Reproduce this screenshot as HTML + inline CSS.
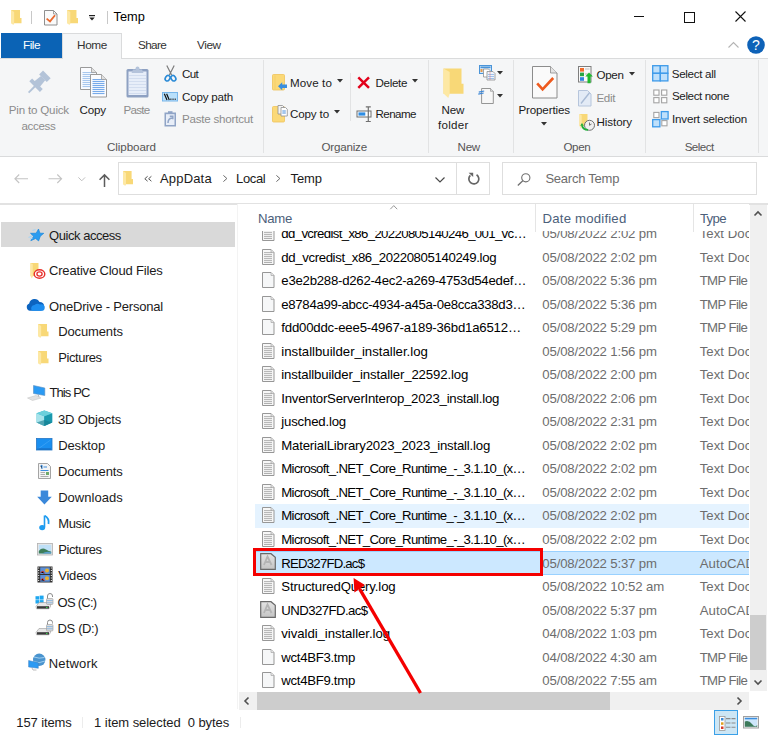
<!DOCTYPE html>
<html><head><meta charset="utf-8"><style>
html,body{margin:0;padding:0;width:768px;height:743px;overflow:hidden;background:#fff;}
body{position:relative;font-family:"Liberation Sans",sans-serif;}
.t{position:absolute;white-space:nowrap;}
</style></head><body>
<div class="t" style="left:113.50px;top:11.06px;font-size:12.8px;line-height:12.8px;color:#000;letter-spacing:0.000px;">Temp</div>
<div style="position:absolute;left:31px;top:11px;width:1px;height:13px;background:#c8c8c8;"></div>
<div style="position:absolute;left:107px;top:11px;width:1px;height:13px;background:#c8c8c8;"></div>
<div style="position:absolute;left:633.5px;top:16px;width:10.5px;height:1px;background:#111;"></div>
<div style="position:absolute;left:684px;top:11.5px;width:11px;height:11px;box-sizing:border-box;border:1px solid #111;background:transparent;"></div>
<svg style="position:absolute;left:735px;top:11px;overflow:visible" width="11" height="11" viewBox="0 0 11 11"><path d="M0.5 0.5 L10.5 10.5 M10.5 0.5 L0.5 10.5" stroke="#111" stroke-width="1.1" fill="none"/></svg>
<div style="position:absolute;left:1px;top:33px;width:61px;height:24.5px;background:#0b63b5;"></div>
<div class="t" style="left:23.00px;top:40.01px;font-size:11.8px;line-height:11.8px;color:#fff;letter-spacing:-0.503px;">File</div>
<div style="position:absolute;left:62px;top:33px;width:60px;height:25px;box-sizing:border-box;border:1px solid #dadbdc;background:#f5f6f7;border-bottom:none;"></div>
<div class="t" style="left:77.00px;top:40.01px;font-size:11.8px;line-height:11.8px;color:#333;letter-spacing:-0.369px;">Home</div>
<div class="t" style="left:138.00px;top:40.01px;font-size:11.8px;line-height:11.8px;color:#333;letter-spacing:-0.697px;">Share</div>
<div class="t" style="left:197.00px;top:40.01px;font-size:11.8px;line-height:11.8px;color:#333;letter-spacing:-0.441px;">View</div>
<svg style="position:absolute;left:727.5px;top:42px;overflow:visible" width="11" height="6" viewBox="0 0 11 6"><path d="M0.5 5.5 L5.5 0.5 L10.5 5.5" stroke="#b4b4b4" stroke-width="1.1" fill="none"/></svg>
<svg style="position:absolute;left:747px;top:36px;overflow:visible" width="18" height="18" viewBox="0 0 18 18"><circle cx="9" cy="9" r="8.8" fill="#0e62b8"/><text x="9" y="14" font-family="Liberation Sans" font-size="14" fill="#fff" text-anchor="middle">?</text></svg>
<div style="position:absolute;left:0px;top:57.5px;width:768px;height:99.5px;background:#f5f6f7;border-top:1px solid #dadbdc;border-bottom:1px solid #dadbdc;box-sizing:border-box;"></div>
<div style="position:absolute;left:63px;top:57px;width:58px;height:2px;background:#f5f6f7;"></div>
<div style="position:absolute;left:263px;top:60px;width:1px;height:93px;background:#e2e3e4;"></div>
<div style="position:absolute;left:428px;top:60px;width:1px;height:93px;background:#e2e3e4;"></div>
<div style="position:absolute;left:512.5px;top:60px;width:1px;height:93px;background:#e2e3e4;"></div>
<div style="position:absolute;left:644.8px;top:60px;width:1px;height:93px;background:#e2e3e4;"></div>
<div style="position:absolute;left:757.7px;top:60px;width:1px;height:93px;background:#e2e3e4;"></div>
<div style="position:absolute;left:349.5px;top:73px;width:1px;height:48px;background:#e2e3e4;"></div>
<div class="t" style="left:8.80px;top:104.18px;font-size:11.6px;line-height:11.6px;color:#8c8c8c;letter-spacing:-0.195px;">Pin to Quick</div>
<div class="t" style="left:21.50px;top:119.68px;font-size:11.6px;line-height:11.6px;color:#8c8c8c;letter-spacing:-0.350px;">access</div>
<div class="t" style="left:79.50px;top:104.18px;font-size:11.6px;line-height:11.6px;color:#1b1b1b;letter-spacing:-0.145px;">Copy</div>
<div class="t" style="left:123.50px;top:104.18px;font-size:11.6px;line-height:11.6px;color:#8c8c8c;letter-spacing:-0.732px;">Paste</div>
<div class="t" style="left:182.00px;top:68.18px;font-size:11.6px;line-height:11.6px;color:#1b1b1b;letter-spacing:-0.684px;">Cut</div>
<div class="t" style="left:182.00px;top:90.68px;font-size:11.6px;line-height:11.6px;color:#1b1b1b;letter-spacing:-0.208px;">Copy path</div>
<div class="t" style="left:182.00px;top:112.88px;font-size:11.6px;line-height:11.6px;color:#8c8c8c;letter-spacing:-0.225px;">Paste shortcut</div>
<div class="t" style="left:107.00px;top:141.18px;font-size:11.6px;line-height:11.6px;color:#555;letter-spacing:-0.072px;">Clipboard</div>
<div class="t" style="left:290.00px;top:76.78px;font-size:11.6px;line-height:11.6px;color:#1b1b1b;letter-spacing:0.106px;">Move to</div>
<div class="t" style="left:375.50px;top:76.78px;font-size:11.6px;line-height:11.6px;color:#1b1b1b;letter-spacing:-0.338px;">Delete</div>
<div class="t" style="left:290.00px;top:108.18px;font-size:11.6px;line-height:11.6px;color:#1b1b1b;letter-spacing:-0.139px;">Copy to</div>
<div class="t" style="left:375.50px;top:108.18px;font-size:11.6px;line-height:11.6px;color:#1b1b1b;letter-spacing:-0.557px;">Rename</div>
<div class="t" style="left:321.40px;top:141.18px;font-size:11.6px;line-height:11.6px;color:#555;letter-spacing:-0.183px;">Organize</div>
<div class="t" style="left:441.60px;top:104.48px;font-size:11.6px;line-height:11.6px;color:#1b1b1b;letter-spacing:-0.268px;">New</div>
<div class="t" style="left:438.00px;top:118.98px;font-size:11.6px;line-height:11.6px;color:#1b1b1b;letter-spacing:0.248px;">folder</div>
<div class="t" style="left:457.50px;top:141.18px;font-size:11.6px;line-height:11.6px;color:#555;letter-spacing:-0.235px;">New</div>
<div class="t" style="left:518.40px;top:104.18px;font-size:11.6px;line-height:11.6px;color:#1b1b1b;letter-spacing:-0.127px;">Properties</div>
<div class="t" style="left:596.50px;top:68.88px;font-size:11.6px;line-height:11.6px;color:#1b1b1b;letter-spacing:-0.319px;">Open</div>
<div class="t" style="left:596.50px;top:92.18px;font-size:11.6px;line-height:11.6px;color:#8c8c8c;letter-spacing:-0.372px;">Edit</div>
<div class="t" style="left:596.50px;top:116.18px;font-size:11.6px;line-height:11.6px;color:#1b1b1b;letter-spacing:-0.084px;">History</div>
<div class="t" style="left:563.40px;top:141.18px;font-size:11.6px;line-height:11.6px;color:#555;letter-spacing:-0.344px;">Open</div>
<div class="t" style="left:671.80px;top:68.38px;font-size:11.6px;line-height:11.6px;color:#1b1b1b;letter-spacing:-0.317px;">Select all</div>
<div class="t" style="left:672.00px;top:90.18px;font-size:11.6px;line-height:11.6px;color:#1b1b1b;letter-spacing:-0.388px;">Select none</div>
<div class="t" style="left:672.00px;top:112.68px;font-size:11.6px;line-height:11.6px;color:#1b1b1b;letter-spacing:-0.188px;">Invert selection</div>
<div class="t" style="left:684.70px;top:141.18px;font-size:11.6px;line-height:11.6px;color:#555;letter-spacing:-0.556px;">Select</div>
<svg style="position:absolute;left:336.5px;top:78.5px;overflow:visible" width="6" height="3.5" viewBox="0 0 6 3.5"><path d="M0 0 L6 0 L3 3.5 Z" fill="#333"/></svg>
<svg style="position:absolute;left:412px;top:78.5px;overflow:visible" width="6" height="3.5" viewBox="0 0 6 3.5"><path d="M0 0 L6 0 L3 3.5 Z" fill="#333"/></svg>
<svg style="position:absolute;left:333.5px;top:110px;overflow:visible" width="6" height="3.5" viewBox="0 0 6 3.5"><path d="M0 0 L6 0 L3 3.5 Z" fill="#333"/></svg>
<svg style="position:absolute;left:497px;top:71px;overflow:visible" width="6" height="3.5" viewBox="0 0 6 3.5"><path d="M0 0 L6 0 L3 3.5 Z" fill="#333"/></svg>
<svg style="position:absolute;left:497px;top:94px;overflow:visible" width="6" height="3.5" viewBox="0 0 6 3.5"><path d="M0 0 L6 0 L3 3.5 Z" fill="#333"/></svg>
<svg style="position:absolute;left:540.5px;top:121.5px;overflow:visible" width="6" height="3.5" viewBox="0 0 6 3.5"><path d="M0 0 L6 0 L3 3.5 Z" fill="#333"/></svg>
<svg style="position:absolute;left:629px;top:71.5px;overflow:visible" width="6" height="3.5" viewBox="0 0 6 3.5"><path d="M0 0 L6 0 L3 3.5 Z" fill="#333"/></svg>
<div style="position:absolute;left:0px;top:203px;width:768px;height:1.6px;background:#e2e2e2;"></div>
<div style="position:absolute;left:118px;top:161.5px;width:338.5px;height:33.5px;box-sizing:border-box;border:1px solid #dedede;background:transparent;"></div>
<div style="position:absolute;left:455.8px;top:161.5px;width:34.7px;height:33.5px;box-sizing:border-box;border:1px solid #dedede;background:transparent;"></div>
<div style="position:absolute;left:501.5px;top:161.5px;width:255.3px;height:33.5px;box-sizing:border-box;border:1px solid #dedede;background:transparent;"></div>
<div class="t" style="left:160.00px;top:172.40px;font-size:13px;line-height:13px;color:#1b1b1b;letter-spacing:0.173px;">AppData</div>
<div class="t" style="left:236.00px;top:172.40px;font-size:13px;line-height:13px;color:#1b1b1b;letter-spacing:-0.335px;">Local</div>
<div class="t" style="left:290.60px;top:172.40px;font-size:13px;line-height:13px;color:#1b1b1b;letter-spacing:-0.122px;">Temp</div>
<div class="t" style="left:545.40px;top:171.90px;font-size:13px;line-height:13px;color:#6d6d6d;letter-spacing:-0.232px;">Search Temp</div>
<div style="position:absolute;left:1px;top:222px;width:233.7px;height:25.4px;background:#d9d9d9;"></div>
<div style="position:absolute;left:236.7px;top:204px;width:1px;height:505px;background:#f3f3f3;"></div>
<div class="t" style="left:49.00px;top:229.00px;font-size:13px;line-height:13px;color:#1b1b1b;letter-spacing:-0.450px;">Quick access</div>
<div class="t" style="left:49.00px;top:264.00px;font-size:13px;line-height:13px;color:#1b1b1b;letter-spacing:-0.177px;">Creative Cloud Files</div>
<div class="t" style="left:49.00px;top:299.70px;font-size:13px;line-height:13px;color:#1b1b1b;letter-spacing:-0.198px;">OneDrive - Personal</div>
<div class="t" style="left:58.20px;top:324.80px;font-size:13px;line-height:13px;color:#1b1b1b;letter-spacing:-0.127px;">Documents</div>
<div class="t" style="left:58.20px;top:351.00px;font-size:13px;line-height:13px;color:#1b1b1b;letter-spacing:-0.432px;">Pictures</div>
<div class="t" style="left:49.50px;top:386.20px;font-size:13px;line-height:13px;color:#1b1b1b;letter-spacing:-0.904px;">This PC</div>
<div class="t" style="left:58.00px;top:412.50px;font-size:13px;line-height:13px;color:#1b1b1b;letter-spacing:-0.130px;">3D Objects</div>
<div class="t" style="left:58.20px;top:438.60px;font-size:13px;line-height:13px;color:#1b1b1b;letter-spacing:-0.113px;">Desktop</div>
<div class="t" style="left:58.00px;top:465.00px;font-size:13px;line-height:13px;color:#1b1b1b;letter-spacing:-0.127px;">Documents</div>
<div class="t" style="left:58.20px;top:491.00px;font-size:13px;line-height:13px;color:#1b1b1b;letter-spacing:0.032px;">Downloads</div>
<div class="t" style="left:58.20px;top:517.20px;font-size:13px;line-height:13px;color:#1b1b1b;letter-spacing:-0.329px;">Music</div>
<div class="t" style="left:58.20px;top:543.40px;font-size:13px;line-height:13px;color:#1b1b1b;letter-spacing:-0.432px;">Pictures</div>
<div class="t" style="left:58.20px;top:569.40px;font-size:13px;line-height:13px;color:#1b1b1b;letter-spacing:-0.202px;">Videos</div>
<div class="t" style="left:57.60px;top:595.50px;font-size:13px;line-height:13px;color:#1b1b1b;letter-spacing:-0.750px;">OS (C:)</div>
<div class="t" style="left:57.60px;top:621.50px;font-size:13px;line-height:13px;color:#1b1b1b;letter-spacing:-0.376px;">DS (D:)</div>
<div class="t" style="left:48.80px;top:657.00px;font-size:13px;line-height:13px;color:#1b1b1b;letter-spacing:0.175px;">Network</div>
<div style="position:absolute;left:255px;top:504.0300000000001px;width:494px;height:23.53px;background:#e5f3ff;"></div>
<div style="position:absolute;left:255px;top:551.09px;width:494px;height:23.53px;box-sizing:border-box;border:1px solid #99d1ff;background:#cce8ff;border-right:none;"></div>
<div style="position:absolute;left:0;top:231px;width:749px;height:461px;overflow:hidden">
<div style="position:absolute;left:0;top:0;width:535px;height:461px;overflow:hidden">
<div class="t" style="left:281.30px;top:-3.90px;font-size:13.2px;line-height:13.2px;color:#000;letter-spacing:-0.640px;">dd_vcredist_x86_20220805140246_001_vc…</div>
<svg style="position:absolute;left:262px;top:-5.929999999999989px;overflow:visible" width="12.5" height="16" viewBox="0 0 12.5 16"><path d="M0.5 0.5 H9 L12 3.5 V15.5 H0.5 Z" fill="#f7f7f7" stroke="#979797" stroke-width="1"/><rect x="2" y="3.2" width="8" height="0.9" fill="#a8a8a8"/><rect x="2" y="5.2" width="8" height="0.9" fill="#a8a8a8"/><rect x="2" y="7.2" width="8" height="0.9" fill="#a8a8a8"/><rect x="2" y="9.2" width="8" height="0.9" fill="#a8a8a8"/><rect x="2" y="11.2" width="8" height="0.9" fill="#a8a8a8"/><rect x="2" y="13" width="8" height="0.9" fill="#a8a8a8"/><path d="M9 0.5 V3.5 H12" fill="#ddd" stroke="#9a9a9a" stroke-width="0.6"/></svg>
</div>
<div class="t" style="left:542.30px;top:-3.90px;font-size:13.2px;line-height:13.2px;color:#6d6d6d;letter-spacing:-0.156px;">05/08/2022 2:02 pm</div>
<div style="position:absolute;left:0;top:0;width:749px;height:461px;overflow:hidden">
<div class="t" style="left:699.70px;top:-3.90px;font-size:13.2px;line-height:13.2px;color:#6d6d6d;letter-spacing:0.050px;">Text Doc</div>
</div>
<div style="position:absolute;left:0;top:0;width:535px;height:461px;overflow:hidden">
<div class="t" style="left:281.30px;top:19.63px;font-size:13.2px;line-height:13.2px;color:#000;letter-spacing:-0.368px;">dd_vcredist_x86_20220805140249.log</div>
<svg style="position:absolute;left:262px;top:17.600000000000012px;overflow:visible" width="12.5" height="16" viewBox="0 0 12.5 16"><path d="M0.5 0.5 H9 L12 3.5 V15.5 H0.5 Z" fill="#f7f7f7" stroke="#979797" stroke-width="1"/><rect x="2" y="3.2" width="8" height="0.9" fill="#a8a8a8"/><rect x="2" y="5.2" width="8" height="0.9" fill="#a8a8a8"/><rect x="2" y="7.2" width="8" height="0.9" fill="#a8a8a8"/><rect x="2" y="9.2" width="8" height="0.9" fill="#a8a8a8"/><rect x="2" y="11.2" width="8" height="0.9" fill="#a8a8a8"/><rect x="2" y="13" width="8" height="0.9" fill="#a8a8a8"/><path d="M9 0.5 V3.5 H12" fill="#ddd" stroke="#9a9a9a" stroke-width="0.6"/></svg>
</div>
<div class="t" style="left:542.30px;top:19.63px;font-size:13.2px;line-height:13.2px;color:#6d6d6d;letter-spacing:-0.156px;">05/08/2022 2:02 pm</div>
<div style="position:absolute;left:0;top:0;width:749px;height:461px;overflow:hidden">
<div class="t" style="left:699.70px;top:19.63px;font-size:13.2px;line-height:13.2px;color:#6d6d6d;letter-spacing:0.050px;">Text Doc</div>
</div>
<div style="position:absolute;left:0;top:0;width:535px;height:461px;overflow:hidden">
<div class="t" style="left:281.30px;top:43.16px;font-size:13.2px;line-height:13.2px;color:#000;letter-spacing:-0.248px;">e3e2b288-d262-4ec2-a269-4753d54edef…</div>
<svg style="position:absolute;left:262px;top:41.13000000000004px;overflow:visible" width="12.5" height="16" viewBox="0 0 12.5 16"><path d="M0.5 0.5 H9 L12 3.5 V15.5 H0.5 Z" fill="#f6f7f8" stroke="#979797" stroke-width="1"/><path d="M9 0.5 V3.5 H12" fill="#e5e5e5" stroke="#9a9a9a" stroke-width="0.6"/></svg>
</div>
<div class="t" style="left:542.30px;top:43.16px;font-size:13.2px;line-height:13.2px;color:#6d6d6d;letter-spacing:-0.156px;">05/08/2022 5:36 pm</div>
<div style="position:absolute;left:0;top:0;width:749px;height:461px;overflow:hidden">
<div class="t" style="left:699.70px;top:43.16px;font-size:13.2px;line-height:13.2px;color:#6d6d6d;letter-spacing:-0.620px;">TMP File</div>
</div>
<div style="position:absolute;left:0;top:0;width:535px;height:461px;overflow:hidden">
<div class="t" style="left:281.30px;top:66.69px;font-size:13.2px;line-height:13.2px;color:#000;letter-spacing:-0.310px;">e8784a99-abcc-4934-a45a-0e8cca338d3…</div>
<svg style="position:absolute;left:262px;top:64.66000000000001px;overflow:visible" width="12.5" height="16" viewBox="0 0 12.5 16"><path d="M0.5 0.5 H9 L12 3.5 V15.5 H0.5 Z" fill="#f6f7f8" stroke="#979797" stroke-width="1"/><path d="M9 0.5 V3.5 H12" fill="#e5e5e5" stroke="#9a9a9a" stroke-width="0.6"/></svg>
</div>
<div class="t" style="left:542.30px;top:66.69px;font-size:13.2px;line-height:13.2px;color:#6d6d6d;letter-spacing:-0.156px;">05/08/2022 5:36 pm</div>
<div style="position:absolute;left:0;top:0;width:749px;height:461px;overflow:hidden">
<div class="t" style="left:699.70px;top:66.69px;font-size:13.2px;line-height:13.2px;color:#6d6d6d;letter-spacing:-0.620px;">TMP File</div>
</div>
<div style="position:absolute;left:0;top:0;width:535px;height:461px;overflow:hidden">
<div class="t" style="left:281.30px;top:90.22px;font-size:13.2px;line-height:13.2px;color:#000;letter-spacing:-0.194px;">fdd00ddc-eee5-4967-a189-36bd1a6512…</div>
<svg style="position:absolute;left:262px;top:88.18999999999998px;overflow:visible" width="12.5" height="16" viewBox="0 0 12.5 16"><path d="M0.5 0.5 H9 L12 3.5 V15.5 H0.5 Z" fill="#f6f7f8" stroke="#979797" stroke-width="1"/><path d="M9 0.5 V3.5 H12" fill="#e5e5e5" stroke="#9a9a9a" stroke-width="0.6"/></svg>
</div>
<div class="t" style="left:542.30px;top:90.22px;font-size:13.2px;line-height:13.2px;color:#6d6d6d;letter-spacing:-0.156px;">05/08/2022 5:29 pm</div>
<div style="position:absolute;left:0;top:0;width:749px;height:461px;overflow:hidden">
<div class="t" style="left:699.70px;top:90.22px;font-size:13.2px;line-height:13.2px;color:#6d6d6d;letter-spacing:-0.620px;">TMP File</div>
</div>
<div style="position:absolute;left:0;top:0;width:535px;height:461px;overflow:hidden">
<div class="t" style="left:281.30px;top:113.75px;font-size:13.2px;line-height:13.2px;color:#000;letter-spacing:-0.002px;">installbuilder_installer.log</div>
<svg style="position:absolute;left:262px;top:111.72000000000001px;overflow:visible" width="12.5" height="16" viewBox="0 0 12.5 16"><path d="M0.5 0.5 H9 L12 3.5 V15.5 H0.5 Z" fill="#f7f7f7" stroke="#979797" stroke-width="1"/><rect x="2" y="3.2" width="8" height="0.9" fill="#a8a8a8"/><rect x="2" y="5.2" width="8" height="0.9" fill="#a8a8a8"/><rect x="2" y="7.2" width="8" height="0.9" fill="#a8a8a8"/><rect x="2" y="9.2" width="8" height="0.9" fill="#a8a8a8"/><rect x="2" y="11.2" width="8" height="0.9" fill="#a8a8a8"/><rect x="2" y="13" width="8" height="0.9" fill="#a8a8a8"/><path d="M9 0.5 V3.5 H12" fill="#ddd" stroke="#9a9a9a" stroke-width="0.6"/></svg>
</div>
<div class="t" style="left:542.30px;top:113.75px;font-size:13.2px;line-height:13.2px;color:#6d6d6d;letter-spacing:-0.156px;">05/08/2022 1:56 pm</div>
<div style="position:absolute;left:0;top:0;width:749px;height:461px;overflow:hidden">
<div class="t" style="left:699.70px;top:113.75px;font-size:13.2px;line-height:13.2px;color:#6d6d6d;letter-spacing:0.050px;">Text Doc</div>
</div>
<div style="position:absolute;left:0;top:0;width:535px;height:461px;overflow:hidden">
<div class="t" style="left:281.30px;top:137.28px;font-size:13.2px;line-height:13.2px;color:#000;letter-spacing:-0.133px;">installbuilder_installer_22592.log</div>
<svg style="position:absolute;left:262px;top:135.25000000000006px;overflow:visible" width="12.5" height="16" viewBox="0 0 12.5 16"><path d="M0.5 0.5 H9 L12 3.5 V15.5 H0.5 Z" fill="#f7f7f7" stroke="#979797" stroke-width="1"/><rect x="2" y="3.2" width="8" height="0.9" fill="#a8a8a8"/><rect x="2" y="5.2" width="8" height="0.9" fill="#a8a8a8"/><rect x="2" y="7.2" width="8" height="0.9" fill="#a8a8a8"/><rect x="2" y="9.2" width="8" height="0.9" fill="#a8a8a8"/><rect x="2" y="11.2" width="8" height="0.9" fill="#a8a8a8"/><rect x="2" y="13" width="8" height="0.9" fill="#a8a8a8"/><path d="M9 0.5 V3.5 H12" fill="#ddd" stroke="#9a9a9a" stroke-width="0.6"/></svg>
</div>
<div class="t" style="left:542.30px;top:137.28px;font-size:13.2px;line-height:13.2px;color:#6d6d6d;letter-spacing:-0.156px;">05/08/2022 2:00 pm</div>
<div style="position:absolute;left:0;top:0;width:749px;height:461px;overflow:hidden">
<div class="t" style="left:699.70px;top:137.28px;font-size:13.2px;line-height:13.2px;color:#6d6d6d;letter-spacing:0.050px;">Text Doc</div>
</div>
<div style="position:absolute;left:0;top:0;width:535px;height:461px;overflow:hidden">
<div class="t" style="left:281.30px;top:160.81px;font-size:13.2px;line-height:13.2px;color:#000;letter-spacing:-0.230px;">InventorServerInterop_2023_install.log</div>
<svg style="position:absolute;left:262px;top:158.78000000000003px;overflow:visible" width="12.5" height="16" viewBox="0 0 12.5 16"><path d="M0.5 0.5 H9 L12 3.5 V15.5 H0.5 Z" fill="#f7f7f7" stroke="#979797" stroke-width="1"/><rect x="2" y="3.2" width="8" height="0.9" fill="#a8a8a8"/><rect x="2" y="5.2" width="8" height="0.9" fill="#a8a8a8"/><rect x="2" y="7.2" width="8" height="0.9" fill="#a8a8a8"/><rect x="2" y="9.2" width="8" height="0.9" fill="#a8a8a8"/><rect x="2" y="11.2" width="8" height="0.9" fill="#a8a8a8"/><rect x="2" y="13" width="8" height="0.9" fill="#a8a8a8"/><path d="M9 0.5 V3.5 H12" fill="#ddd" stroke="#9a9a9a" stroke-width="0.6"/></svg>
</div>
<div class="t" style="left:542.30px;top:160.81px;font-size:13.2px;line-height:13.2px;color:#6d6d6d;letter-spacing:-0.156px;">05/08/2022 2:06 pm</div>
<div style="position:absolute;left:0;top:0;width:749px;height:461px;overflow:hidden">
<div class="t" style="left:699.70px;top:160.81px;font-size:13.2px;line-height:13.2px;color:#6d6d6d;letter-spacing:0.050px;">Text Doc</div>
</div>
<div style="position:absolute;left:0;top:0;width:535px;height:461px;overflow:hidden">
<div class="t" style="left:281.30px;top:184.34px;font-size:13.2px;line-height:13.2px;color:#000;letter-spacing:-0.189px;">jusched.log</div>
<svg style="position:absolute;left:262px;top:182.31px;overflow:visible" width="12.5" height="16" viewBox="0 0 12.5 16"><path d="M0.5 0.5 H9 L12 3.5 V15.5 H0.5 Z" fill="#f7f7f7" stroke="#979797" stroke-width="1"/><rect x="2" y="3.2" width="8" height="0.9" fill="#a8a8a8"/><rect x="2" y="5.2" width="8" height="0.9" fill="#a8a8a8"/><rect x="2" y="7.2" width="8" height="0.9" fill="#a8a8a8"/><rect x="2" y="9.2" width="8" height="0.9" fill="#a8a8a8"/><rect x="2" y="11.2" width="8" height="0.9" fill="#a8a8a8"/><rect x="2" y="13" width="8" height="0.9" fill="#a8a8a8"/><path d="M9 0.5 V3.5 H12" fill="#ddd" stroke="#9a9a9a" stroke-width="0.6"/></svg>
</div>
<div class="t" style="left:542.30px;top:184.34px;font-size:13.2px;line-height:13.2px;color:#6d6d6d;letter-spacing:-0.156px;">05/08/2022 2:31 pm</div>
<div style="position:absolute;left:0;top:0;width:749px;height:461px;overflow:hidden">
<div class="t" style="left:699.70px;top:184.34px;font-size:13.2px;line-height:13.2px;color:#6d6d6d;letter-spacing:0.050px;">Text Doc</div>
</div>
<div style="position:absolute;left:0;top:0;width:535px;height:461px;overflow:hidden">
<div class="t" style="left:281.30px;top:207.87px;font-size:13.2px;line-height:13.2px;color:#000;letter-spacing:-0.187px;">MaterialLibrary2023_2023_install.log</div>
<svg style="position:absolute;left:262px;top:205.84000000000003px;overflow:visible" width="12.5" height="16" viewBox="0 0 12.5 16"><path d="M0.5 0.5 H9 L12 3.5 V15.5 H0.5 Z" fill="#f7f7f7" stroke="#979797" stroke-width="1"/><rect x="2" y="3.2" width="8" height="0.9" fill="#a8a8a8"/><rect x="2" y="5.2" width="8" height="0.9" fill="#a8a8a8"/><rect x="2" y="7.2" width="8" height="0.9" fill="#a8a8a8"/><rect x="2" y="9.2" width="8" height="0.9" fill="#a8a8a8"/><rect x="2" y="11.2" width="8" height="0.9" fill="#a8a8a8"/><rect x="2" y="13" width="8" height="0.9" fill="#a8a8a8"/><path d="M9 0.5 V3.5 H12" fill="#ddd" stroke="#9a9a9a" stroke-width="0.6"/></svg>
</div>
<div class="t" style="left:542.30px;top:207.87px;font-size:13.2px;line-height:13.2px;color:#6d6d6d;letter-spacing:-0.156px;">05/08/2022 2:02 pm</div>
<div style="position:absolute;left:0;top:0;width:749px;height:461px;overflow:hidden">
<div class="t" style="left:699.70px;top:207.87px;font-size:13.2px;line-height:13.2px;color:#6d6d6d;letter-spacing:0.050px;">Text Doc</div>
</div>
<div style="position:absolute;left:0;top:0;width:535px;height:461px;overflow:hidden">
<div class="t" style="left:281.30px;top:231.40px;font-size:13.2px;line-height:13.2px;color:#000;letter-spacing:-0.667px;">Microsoft_.NET_Core_Runtime_-_3.1.10_(x…</div>
<svg style="position:absolute;left:262px;top:229.37000000000006px;overflow:visible" width="12.5" height="16" viewBox="0 0 12.5 16"><path d="M0.5 0.5 H9 L12 3.5 V15.5 H0.5 Z" fill="#f7f7f7" stroke="#979797" stroke-width="1"/><rect x="2" y="3.2" width="8" height="0.9" fill="#a8a8a8"/><rect x="2" y="5.2" width="8" height="0.9" fill="#a8a8a8"/><rect x="2" y="7.2" width="8" height="0.9" fill="#a8a8a8"/><rect x="2" y="9.2" width="8" height="0.9" fill="#a8a8a8"/><rect x="2" y="11.2" width="8" height="0.9" fill="#a8a8a8"/><rect x="2" y="13" width="8" height="0.9" fill="#a8a8a8"/><path d="M9 0.5 V3.5 H12" fill="#ddd" stroke="#9a9a9a" stroke-width="0.6"/></svg>
</div>
<div class="t" style="left:542.30px;top:231.40px;font-size:13.2px;line-height:13.2px;color:#6d6d6d;letter-spacing:-0.156px;">05/08/2022 2:02 pm</div>
<div style="position:absolute;left:0;top:0;width:749px;height:461px;overflow:hidden">
<div class="t" style="left:699.70px;top:231.40px;font-size:13.2px;line-height:13.2px;color:#6d6d6d;letter-spacing:0.050px;">Text Doc</div>
</div>
<div style="position:absolute;left:0;top:0;width:535px;height:461px;overflow:hidden">
<div class="t" style="left:281.30px;top:254.93px;font-size:13.2px;line-height:13.2px;color:#000;letter-spacing:-0.667px;">Microsoft_.NET_Core_Runtime_-_3.1.10_(x…</div>
<svg style="position:absolute;left:262px;top:252.90000000000003px;overflow:visible" width="12.5" height="16" viewBox="0 0 12.5 16"><path d="M0.5 0.5 H9 L12 3.5 V15.5 H0.5 Z" fill="#f7f7f7" stroke="#979797" stroke-width="1"/><rect x="2" y="3.2" width="8" height="0.9" fill="#a8a8a8"/><rect x="2" y="5.2" width="8" height="0.9" fill="#a8a8a8"/><rect x="2" y="7.2" width="8" height="0.9" fill="#a8a8a8"/><rect x="2" y="9.2" width="8" height="0.9" fill="#a8a8a8"/><rect x="2" y="11.2" width="8" height="0.9" fill="#a8a8a8"/><rect x="2" y="13" width="8" height="0.9" fill="#a8a8a8"/><path d="M9 0.5 V3.5 H12" fill="#ddd" stroke="#9a9a9a" stroke-width="0.6"/></svg>
</div>
<div class="t" style="left:542.30px;top:254.93px;font-size:13.2px;line-height:13.2px;color:#6d6d6d;letter-spacing:-0.156px;">05/08/2022 2:02 pm</div>
<div style="position:absolute;left:0;top:0;width:749px;height:461px;overflow:hidden">
<div class="t" style="left:699.70px;top:254.93px;font-size:13.2px;line-height:13.2px;color:#6d6d6d;letter-spacing:0.050px;">Text Doc</div>
</div>
<div style="position:absolute;left:0;top:0;width:535px;height:461px;overflow:hidden">
<div class="t" style="left:281.30px;top:278.46px;font-size:13.2px;line-height:13.2px;color:#000;letter-spacing:-0.667px;">Microsoft_.NET_Core_Runtime_-_3.1.10_(x…</div>
<svg style="position:absolute;left:262px;top:276.4300000000001px;overflow:visible" width="12.5" height="16" viewBox="0 0 12.5 16"><path d="M0.5 0.5 H9 L12 3.5 V15.5 H0.5 Z" fill="#f7f7f7" stroke="#979797" stroke-width="1"/><rect x="2" y="3.2" width="8" height="0.9" fill="#a8a8a8"/><rect x="2" y="5.2" width="8" height="0.9" fill="#a8a8a8"/><rect x="2" y="7.2" width="8" height="0.9" fill="#a8a8a8"/><rect x="2" y="9.2" width="8" height="0.9" fill="#a8a8a8"/><rect x="2" y="11.2" width="8" height="0.9" fill="#a8a8a8"/><rect x="2" y="13" width="8" height="0.9" fill="#a8a8a8"/><path d="M9 0.5 V3.5 H12" fill="#ddd" stroke="#9a9a9a" stroke-width="0.6"/></svg>
</div>
<div class="t" style="left:542.30px;top:278.46px;font-size:13.2px;line-height:13.2px;color:#6d6d6d;letter-spacing:-0.156px;">05/08/2022 2:02 pm</div>
<div style="position:absolute;left:0;top:0;width:749px;height:461px;overflow:hidden">
<div class="t" style="left:699.70px;top:278.46px;font-size:13.2px;line-height:13.2px;color:#6d6d6d;letter-spacing:0.050px;">Text Doc</div>
</div>
<div style="position:absolute;left:0;top:0;width:535px;height:461px;overflow:hidden">
<div class="t" style="left:281.30px;top:301.99px;font-size:13.2px;line-height:13.2px;color:#000;letter-spacing:-0.667px;">Microsoft_.NET_Core_Runtime_-_3.1.10_(x…</div>
<svg style="position:absolute;left:262px;top:299.9600000000001px;overflow:visible" width="12.5" height="16" viewBox="0 0 12.5 16"><path d="M0.5 0.5 H9 L12 3.5 V15.5 H0.5 Z" fill="#f7f7f7" stroke="#979797" stroke-width="1"/><rect x="2" y="3.2" width="8" height="0.9" fill="#a8a8a8"/><rect x="2" y="5.2" width="8" height="0.9" fill="#a8a8a8"/><rect x="2" y="7.2" width="8" height="0.9" fill="#a8a8a8"/><rect x="2" y="9.2" width="8" height="0.9" fill="#a8a8a8"/><rect x="2" y="11.2" width="8" height="0.9" fill="#a8a8a8"/><rect x="2" y="13" width="8" height="0.9" fill="#a8a8a8"/><path d="M9 0.5 V3.5 H12" fill="#ddd" stroke="#9a9a9a" stroke-width="0.6"/></svg>
</div>
<div class="t" style="left:542.30px;top:301.99px;font-size:13.2px;line-height:13.2px;color:#6d6d6d;letter-spacing:-0.156px;">05/08/2022 2:02 pm</div>
<div style="position:absolute;left:0;top:0;width:749px;height:461px;overflow:hidden">
<div class="t" style="left:699.70px;top:301.99px;font-size:13.2px;line-height:13.2px;color:#6d6d6d;letter-spacing:0.050px;">Text Doc</div>
</div>
<div style="position:absolute;left:0;top:0;width:535px;height:461px;overflow:hidden">
<div class="t" style="left:281.30px;top:325.52px;font-size:13.2px;line-height:13.2px;color:#000;letter-spacing:-0.786px;">RED327FD.ac$</div>
<svg style="position:absolute;left:260px;top:322.49000000000007px;overflow:visible" width="16" height="17" viewBox="0 0 16 17"><defs><linearGradient id="ag" x1="0" y1="0" x2="0" y2="1"><stop offset="0" stop-color="#e4e4e4"/><stop offset="1" stop-color="#c4c4c4"/></linearGradient></defs><path d="M0.7 0.7 H11 L15.3 4.4 V16.3 H0.7 Z" fill="url(#ag)" stroke="#6a6a6a" stroke-width="1.2"/><path d="M4 12 L7.5 3.5 L11.5 12 M5.5 9 H9.5" stroke="#b4b4b4" stroke-width="1.8" fill="none"/></svg>
</div>
<div class="t" style="left:542.30px;top:325.52px;font-size:13.2px;line-height:13.2px;color:#6d6d6d;letter-spacing:-0.156px;">05/08/2022 5:37 pm</div>
<div style="position:absolute;left:0;top:0;width:749px;height:461px;overflow:hidden">
<div class="t" style="left:699.70px;top:325.52px;font-size:13.2px;line-height:13.2px;color:#6d6d6d;letter-spacing:0.050px;">AutoCAD</div>
</div>
<div style="position:absolute;left:0;top:0;width:535px;height:461px;overflow:hidden">
<div class="t" style="left:281.30px;top:349.05px;font-size:13.2px;line-height:13.2px;color:#000;letter-spacing:-0.149px;">StructuredQuery.log</div>
<svg style="position:absolute;left:262px;top:347.02000000000004px;overflow:visible" width="12.5" height="16" viewBox="0 0 12.5 16"><path d="M0.5 0.5 H9 L12 3.5 V15.5 H0.5 Z" fill="#f7f7f7" stroke="#979797" stroke-width="1"/><rect x="2" y="3.2" width="8" height="0.9" fill="#a8a8a8"/><rect x="2" y="5.2" width="8" height="0.9" fill="#a8a8a8"/><rect x="2" y="7.2" width="8" height="0.9" fill="#a8a8a8"/><rect x="2" y="9.2" width="8" height="0.9" fill="#a8a8a8"/><rect x="2" y="11.2" width="8" height="0.9" fill="#a8a8a8"/><rect x="2" y="13" width="8" height="0.9" fill="#a8a8a8"/><path d="M9 0.5 V3.5 H12" fill="#ddd" stroke="#9a9a9a" stroke-width="0.6"/></svg>
</div>
<div class="t" style="left:542.30px;top:349.05px;font-size:13.2px;line-height:13.2px;color:#6d6d6d;letter-spacing:-0.156px;">05/08/2022 10:52 am</div>
<div style="position:absolute;left:0;top:0;width:749px;height:461px;overflow:hidden">
<div class="t" style="left:699.70px;top:349.05px;font-size:13.2px;line-height:13.2px;color:#6d6d6d;letter-spacing:0.050px;">Text Doc</div>
</div>
<div style="position:absolute;left:0;top:0;width:535px;height:461px;overflow:hidden">
<div class="t" style="left:281.30px;top:372.58px;font-size:13.2px;line-height:13.2px;color:#000;letter-spacing:-0.564px;">UND327FD.ac$</div>
<svg style="position:absolute;left:260px;top:369.55px;overflow:visible" width="16" height="17" viewBox="0 0 16 17"><defs><linearGradient id="ag" x1="0" y1="0" x2="0" y2="1"><stop offset="0" stop-color="#e4e4e4"/><stop offset="1" stop-color="#c4c4c4"/></linearGradient></defs><path d="M0.7 0.7 H11 L15.3 4.4 V16.3 H0.7 Z" fill="url(#ag)" stroke="#6a6a6a" stroke-width="1.2"/><path d="M4 12 L7.5 3.5 L11.5 12 M5.5 9 H9.5" stroke="#b4b4b4" stroke-width="1.8" fill="none"/></svg>
</div>
<div class="t" style="left:542.30px;top:372.58px;font-size:13.2px;line-height:13.2px;color:#6d6d6d;letter-spacing:-0.156px;">05/08/2022 5:37 pm</div>
<div style="position:absolute;left:0;top:0;width:749px;height:461px;overflow:hidden">
<div class="t" style="left:699.70px;top:372.58px;font-size:13.2px;line-height:13.2px;color:#6d6d6d;letter-spacing:0.050px;">AutoCAD</div>
</div>
<div style="position:absolute;left:0;top:0;width:535px;height:461px;overflow:hidden">
<div class="t" style="left:281.30px;top:396.11px;font-size:13.2px;line-height:13.2px;color:#000;letter-spacing:-0.060px;">vivaldi_installer.log</div>
<svg style="position:absolute;left:262px;top:394.08px;overflow:visible" width="12.5" height="16" viewBox="0 0 12.5 16"><path d="M0.5 0.5 H9 L12 3.5 V15.5 H0.5 Z" fill="#f7f7f7" stroke="#979797" stroke-width="1"/><rect x="2" y="3.2" width="8" height="0.9" fill="#a8a8a8"/><rect x="2" y="5.2" width="8" height="0.9" fill="#a8a8a8"/><rect x="2" y="7.2" width="8" height="0.9" fill="#a8a8a8"/><rect x="2" y="9.2" width="8" height="0.9" fill="#a8a8a8"/><rect x="2" y="11.2" width="8" height="0.9" fill="#a8a8a8"/><rect x="2" y="13" width="8" height="0.9" fill="#a8a8a8"/><path d="M9 0.5 V3.5 H12" fill="#ddd" stroke="#9a9a9a" stroke-width="0.6"/></svg>
</div>
<div class="t" style="left:542.30px;top:396.11px;font-size:13.2px;line-height:13.2px;color:#6d6d6d;letter-spacing:-0.156px;">04/08/2022 1:03 pm</div>
<div style="position:absolute;left:0;top:0;width:749px;height:461px;overflow:hidden">
<div class="t" style="left:699.70px;top:396.11px;font-size:13.2px;line-height:13.2px;color:#6d6d6d;letter-spacing:0.050px;">Text Doc</div>
</div>
<div style="position:absolute;left:0;top:0;width:535px;height:461px;overflow:hidden">
<div class="t" style="left:281.30px;top:419.64px;font-size:13.2px;line-height:13.2px;color:#000;letter-spacing:-0.302px;">wct4BF3.tmp</div>
<svg style="position:absolute;left:262px;top:417.60999999999996px;overflow:visible" width="12.5" height="16" viewBox="0 0 12.5 16"><path d="M0.5 0.5 H9 L12 3.5 V15.5 H0.5 Z" fill="#f6f7f8" stroke="#979797" stroke-width="1"/><path d="M9 0.5 V3.5 H12" fill="#e5e5e5" stroke="#9a9a9a" stroke-width="0.6"/></svg>
</div>
<div class="t" style="left:542.30px;top:419.64px;font-size:13.2px;line-height:13.2px;color:#6d6d6d;letter-spacing:-0.156px;">04/08/2022 4:30 am</div>
<div style="position:absolute;left:0;top:0;width:749px;height:461px;overflow:hidden">
<div class="t" style="left:699.70px;top:419.64px;font-size:13.2px;line-height:13.2px;color:#6d6d6d;letter-spacing:-0.620px;">TMP File</div>
</div>
<div style="position:absolute;left:0;top:0;width:535px;height:461px;overflow:hidden">
<div class="t" style="left:281.30px;top:443.17px;font-size:13.2px;line-height:13.2px;color:#000;letter-spacing:-0.302px;">wct4BF9.tmp</div>
<svg style="position:absolute;left:262px;top:441.14000000000004px;overflow:visible" width="12.5" height="16" viewBox="0 0 12.5 16"><path d="M0.5 0.5 H9 L12 3.5 V15.5 H0.5 Z" fill="#f6f7f8" stroke="#979797" stroke-width="1"/><path d="M9 0.5 V3.5 H12" fill="#e5e5e5" stroke="#9a9a9a" stroke-width="0.6"/></svg>
</div>
<div class="t" style="left:542.30px;top:443.17px;font-size:13.2px;line-height:13.2px;color:#6d6d6d;letter-spacing:-0.156px;">05/08/2022 7:55 am</div>
<div style="position:absolute;left:0;top:0;width:749px;height:461px;overflow:hidden">
<div class="t" style="left:699.70px;top:443.17px;font-size:13.2px;line-height:13.2px;color:#6d6d6d;letter-spacing:-0.620px;">TMP File</div>
</div>
</div>
<div style="position:absolute;left:238px;top:204px;width:511px;height:27px;background:#fff;"></div>
<div class="t" style="left:257.90px;top:212.23px;font-size:13.2px;line-height:13.2px;color:#4c607a;letter-spacing:-0.277px;">Name</div>
<div class="t" style="left:542.60px;top:212.33px;font-size:13.2px;line-height:13.2px;color:#4c607a;letter-spacing:0.189px;">Date modified</div>
<div class="t" style="left:700.00px;top:212.33px;font-size:13.2px;line-height:13.2px;color:#4c607a;letter-spacing:-0.704px;">Type</div>
<div style="position:absolute;left:535px;top:204px;width:1px;height:27.5px;background:#e5e5e5;"></div>
<div style="position:absolute;left:692.5px;top:204px;width:1px;height:27.5px;background:#e5e5e5;"></div>
<svg style="position:absolute;left:389.5px;top:205px;overflow:visible" width="7.5" height="4.5" viewBox="0 0 7.5 4.5"><path d="M0.3 4.2 L3.75 0.6 L7.2 4.2" stroke="#8a8a8a" stroke-width="0.9" fill="none"/></svg>
<div style="position:absolute;left:253px;top:548.2px;width:289.7px;height:27.9px;box-sizing:border-box;border:3px solid #f40000;background:transparent;"></div>
<div style="position:absolute;left:749.8px;top:204.5px;width:16.9px;height:486.5px;background:#f0f0f0;"></div>
<div style="position:absolute;left:750px;top:614.8px;width:16px;height:55.7px;background:#cdcdcd;"></div>
<svg style="position:absolute;left:754.3px;top:211px;overflow:visible" width="8" height="5" viewBox="0 0 8 5"><path d="M0.5 4.5 L4 1 L7.5 4.5" stroke="#505050" stroke-width="1.6" fill="none"/></svg>
<svg style="position:absolute;left:754.3px;top:679.5px;overflow:visible" width="8" height="5" viewBox="0 0 8 5"><path d="M0.5 0.5 L4 4 L7.5 0.5" stroke="#505050" stroke-width="1.6" fill="none"/></svg>
<div style="position:absolute;left:238.5px;top:692.2px;width:510.5px;height:17.5px;background:#f0f0f0;"></div>
<div style="position:absolute;left:257px;top:692.2px;width:353px;height:17.5px;background:#cdcdcd;"></div>
<svg style="position:absolute;left:244px;top:696.8px;overflow:visible" width="5" height="8" viewBox="0 0 5 8"><path d="M4.5 0.5 L1 4 L4.5 7.5" stroke="#505050" stroke-width="1.6" fill="none"/></svg>
<svg style="position:absolute;left:737px;top:696.8px;overflow:visible" width="5" height="8" viewBox="0 0 5 8"><path d="M0.5 0.5 L4 4 L0.5 7.5" stroke="#505050" stroke-width="1.6" fill="none"/></svg>
<div class="t" style="left:16.25px;top:716.30px;font-size:13px;line-height:13px;color:#1b1b1b;letter-spacing:-0.095px;">157 items</div>
<div style="position:absolute;left:82px;top:717px;width:1px;height:11px;background:#ececec;"></div>
<div class="t" style="left:94.10px;top:716.30px;font-size:13px;line-height:13px;color:#1b1b1b;letter-spacing:-0.061px;white-space:pre;">1 item selected  0 bytes</div>
<div style="position:absolute;left:240px;top:717px;width:1px;height:11px;background:#ececec;"></div>
<div style="position:absolute;left:714px;top:710px;width:24px;height:25px;box-sizing:border-box;border:1.5px solid #3aa0e8;background:#cce6f5;"></div>
<svg style="position:absolute;left:718.5px;top:715.5px;overflow:visible" width="17" height="15" viewBox="0 0 17 15"><rect x="0.5" y="0.5" width="5.5" height="14" fill="#fff" stroke="#9a9a9a" stroke-width="0.8"/><rect x="2" y="2" width="2.5" height="2.5" fill="#3a8ad8"/><rect x="2" y="6.3" width="2.5" height="2.5" fill="#e0a020"/><rect x="2" y="10.5" width="2.5" height="2.5" fill="#d83a2a"/><path d="M7 2.6 H16.5 M7 7 H16.5 M7 11.3 H16.5" stroke="#8a8a8a" stroke-width="1.1" stroke-dasharray="4.5 1"/></svg>
<svg style="position:absolute;left:742.5px;top:715.5px;overflow:visible" width="16" height="12.5" viewBox="0 0 16 12.5"><rect x="0.5" y="0.5" width="15" height="11.5" fill="#eee" stroke="#a0a0a0" stroke-width="1"/><rect x="1.8" y="1.8" width="12.4" height="8.9" fill="#cde6fa"/><path d="M1.8 5.5 Q6 4 9 8 T14.2 9 V10.7 H1.8 Z" fill="#3d7a5a"/><rect x="1.8" y="1.8" width="12.4" height="1.5" fill="#3a8ee0"/></svg>
<svg style="position:absolute;left:10.5px;top:9.5px;overflow:visible" width="10.5" height="15" viewBox="0 0 10.5 15"><path d="M0 0 H9.03 V8.10 H10.50 V13.20 H0 Z" fill="#f8d877"/>
<path d="M0 0 L3.15 2.10 V13.20 L2.31 15.00 L0 12.90 Z" fill="#fde8a4"/></svg>
<svg style="position:absolute;left:44px;top:9.5px;overflow:visible" width="13.5" height="15.5" viewBox="0 0 13.5 15.5"><path d="M0.5 0.5 H9.5 L13 4 V15 H0.5 Z" fill="#fafafa" stroke="#8f8f8f" stroke-width="1"/><path d="M9.5 0.5 V4 H13" fill="none" stroke="#8f8f8f" stroke-width="0.8"/><path d="M2.6 8.6 L6 11.4 L11 5.2" fill="none" stroke="#ea6a2f" stroke-width="1.8"/></svg>
<svg style="position:absolute;left:67px;top:10px;overflow:visible" width="11" height="15" viewBox="0 0 11 15"><path d="M0 0 H9.46 V8.10 H11.00 V13.20 H0 Z" fill="#f8d877"/>
<path d="M0 0 L3.30 2.10 V13.20 L2.42 15.00 L0 12.90 Z" fill="#fde8a4"/></svg>
<svg style="position:absolute;left:89px;top:15px;overflow:visible" width="6" height="6" viewBox="0 0 6 6"><rect x="0" y="0" width="6" height="1.2" fill="#222"/><path d="M0.3 2.4 H5.7 L3 5.6 Z" fill="#222"/></svg>
<svg style="position:absolute;left:24px;top:66px;overflow:visible" width="30" height="30" viewBox="0 0 30 30"><g transform="translate(4.6 26.6) rotate(45)" fill="#b3c3d8"><path d="M-0.9 0 L0.9 0 L1 -9 L-1 -9 Z"/><rect x="-7.5" y="-12.5" width="15" height="4"/><path d="M-4.2 -9 L4.2 -9 L3 -20.5 L-3 -20.5 Z"/><rect x="-5.4" y="-25.8" width="10.8" height="5.5"/></g></svg>
<svg style="position:absolute;left:80px;top:66.5px;overflow:visible" width="17" height="23" viewBox="0 0 17 23"><path d="M0.5 0.5 H11.5 L16.5 5.5 V22.5 H0.5 Z" fill="#fbfcff" stroke="#9a9a9a" stroke-width="1"/><rect x="2.5" y="5" width="12" height="1.1" fill="#a9c8ee"/><rect x="2.5" y="7" width="12" height="1.1" fill="#a9c8ee"/><rect x="2.5" y="9" width="12" height="1.1" fill="#a9c8ee"/><rect x="2.5" y="11" width="12" height="1.1" fill="#a9c8ee"/><rect x="2.5" y="13" width="12" height="1.1" fill="#a9c8ee"/><rect x="2.5" y="15" width="12" height="1.1" fill="#a9c8ee"/><rect x="2.5" y="17" width="12" height="1.1" fill="#a9c8ee"/><rect x="2.5" y="19" width="12" height="1.1" fill="#a9c8ee"/><path d="M11.5 0.5 V5.5 H16.5" fill="#e0e0e0" stroke="#9a9a9a" stroke-width="0.8"/></svg>
<svg style="position:absolute;left:89.5px;top:74px;overflow:visible" width="17" height="23.5" viewBox="0 0 17 23.5"><path d="M0.5 0.5 H11.5 L16.5 5.5 V23.0 H0.5 Z" fill="#fbfcff" stroke="#9a9a9a" stroke-width="1"/><rect x="2.5" y="5" width="12" height="1.1" fill="#78abea"/><rect x="2.5" y="7" width="12" height="1.1" fill="#78abea"/><rect x="2.5" y="9" width="12" height="1.1" fill="#78abea"/><rect x="2.5" y="11" width="12" height="1.1" fill="#78abea"/><rect x="2.5" y="13" width="12" height="1.1" fill="#78abea"/><rect x="2.5" y="15" width="12" height="1.1" fill="#78abea"/><rect x="2.5" y="17" width="12" height="1.1" fill="#78abea"/><rect x="2.5" y="19" width="12" height="1.1" fill="#78abea"/><path d="M11.5 0.5 V5.5 H16.5" fill="#e0e0e0" stroke="#9a9a9a" stroke-width="0.8"/></svg>
<svg style="position:absolute;left:125.5px;top:66px;overflow:visible" width="23" height="32" viewBox="0 0 23 32"><rect x="0.5" y="3" width="22" height="28.5" rx="1.5" fill="#8ea1c2"/><rect x="2.5" y="5.5" width="18" height="23.5" fill="#e7eef9"/><rect x="3" y="9" width="17" height="0.9" fill="#d0dbee"/><rect x="3" y="12" width="17" height="0.9" fill="#d0dbee"/><rect x="3" y="15" width="17" height="0.9" fill="#d0dbee"/><rect x="3" y="18" width="17" height="0.9" fill="#d0dbee"/><rect x="3" y="21" width="17" height="0.9" fill="#d0dbee"/><rect x="3" y="24" width="17" height="0.9" fill="#d0dbee"/><rect x="3" y="27" width="17" height="0.9" fill="#d0dbee"/><path d="M5.5 7 L7 3.5 H16 L17.5 7 Z" fill="#b4c3db"/><circle cx="11.5" cy="2.5" r="2" fill="#b4c3db"/></svg>
<svg style="position:absolute;left:164px;top:65px;overflow:visible" width="13" height="17" viewBox="0 0 13 17"><path d="M2.8 0.5 L7.6 10 M10.2 0.5 L5.4 10" stroke="#7c7c7c" stroke-width="1.2" fill="none"/><ellipse cx="3.6" cy="13.2" rx="2.2" ry="2.9" fill="none" stroke="#2a8ad6" stroke-width="1.6" transform="rotate(35 3.6 13.2)"/><ellipse cx="9.4" cy="13.2" rx="2.2" ry="2.9" fill="none" stroke="#2a8ad6" stroke-width="1.6" transform="rotate(-35 9.4 13.2)"/></svg>
<svg style="position:absolute;left:162px;top:91.5px;overflow:visible" width="16" height="9.5" viewBox="0 0 16 9.5"><rect x="0.5" y="0.5" width="15" height="8.5" fill="#b9e0fb" stroke="#78b6ea" stroke-width="1"/><path d="M2.3 1.8 L5 8 M4.6 1.8 L7.3 8" stroke="#111" stroke-width="1.2"/><rect x="8.2" y="6.6" width="1.3" height="1.2" fill="#222"/><rect x="10.4" y="6.6" width="1.3" height="1.2" fill="#222"/><rect x="12.6" y="6.6" width="1.3" height="1.2" fill="#222"/></svg>
<svg style="position:absolute;left:164px;top:110px;overflow:visible" width="12.5" height="17" viewBox="0 0 12.5 17"><rect x="0.5" y="2.5" width="11.5" height="14" fill="#90a4c6"/><rect x="2" y="4.2" width="8.5" height="10.8" fill="#e8eef8"/><rect x="4" y="1.2" width="4.5" height="2.5" fill="#90a4c6"/><path d="M4 13 Q4 8.5 8 8 M5.8 6.2 H8.8 V9.2" stroke="#90a4c6" stroke-width="1.5" fill="none"/></svg>
<svg style="position:absolute;left:271.5px;top:73.5px;overflow:visible" width="15.5" height="17" viewBox="0 0 15.5 17"><rect x="0.5" y="0.5" width="12" height="15.5" rx="1" fill="#fbd978" stroke="#efc35a" stroke-width="0.8"/><rect x="2.5" y="1.5" width="1" height="13.5" fill="#f5cf6a"/><path d="M6 12.3 L10.2 8.3 V10.5 H15 V14.1 H10.2 V16.3 Z" fill="#3a8ede"/></svg>
<svg style="position:absolute;left:271.5px;top:104.5px;overflow:visible" width="16" height="17.5" viewBox="0 0 16 17.5"><rect x="0.5" y="1.5" width="12" height="15.5" rx="1" fill="#fbd978" stroke="#efc35a" stroke-width="0.8"/><path d="M6 0.5 H10.5 L12 2 V9 H6 Z" fill="#f5f5f5" stroke="#8f8f8f" stroke-width="0.8"/><path d="M9 2.5 H13.5 L15.3 4.3 V11 H9 Z" fill="#fff" stroke="#8f8f8f" stroke-width="0.8"/><rect x="10.3" y="5.5" width="3.5" height="1" fill="#4b8fdc"/><rect x="10.3" y="7.5" width="3.5" height="1" fill="#4b8fdc"/></svg>
<svg style="position:absolute;left:357px;top:75.5px;overflow:visible" width="13.5" height="13" viewBox="0 0 13.5 13"><path d="M1.3 1.3 L12 11.8 M12 1.3 L1.3 11.8" stroke="#e2001a" stroke-width="2.5" stroke-linecap="butt"/></svg>
<svg style="position:absolute;left:355.5px;top:105.5px;overflow:visible" width="16" height="16.5" viewBox="0 0 16 16.5"><rect x="1" y="5" width="14" height="6" fill="#fff" stroke="#6e6e6e" stroke-width="1"/><rect x="2.5" y="6.4" width="6.8" height="3.2" fill="#2f8ee4"/><path d="M12.3 0.8 V15.5 M9.8 0.8 H14.8 M9.8 15.5 H14.8" stroke="#707070" stroke-width="1.2"/></svg>
<svg style="position:absolute;left:442.5px;top:67.5px;overflow:visible" width="21" height="30.5" viewBox="0 0 21 30.5"><path d="M0.5 0.5 H18.5 V15.8 H20.5 V25.8 H0.5 Z" fill="#f8d877"/><path d="M0.5 0.5 L6.7 4 V25.8 L5.3 30 L0.5 25.5 Z" fill="#fde8a4"/></svg>
<svg style="position:absolute;left:478.5px;top:65px;overflow:visible" width="17" height="15.5" viewBox="0 0 17 15.5"><rect x="0.5" y="0.5" width="12" height="8" fill="#cfe6fb" stroke="#4a94d8" stroke-width="1"/><rect x="1.5" y="1.5" width="10" height="1.6" fill="#4a94d8"/><path d="M4.5 4 H9.5 L11 5.5 V12 H4.5 Z" fill="#fff" stroke="#8f8f8f" stroke-width="0.8"/><path d="M8 6.5 H14 L16 8.5 V15 H8 Z" fill="#eef3fb" stroke="#8f8f8f" stroke-width="0.8"/><path d="M9 9.5 H15 M9 11.5 H15 M9 13.5 H15" stroke="#6aa0e0" stroke-width="0.6"/><path d="M11 7 V15" stroke="#e07070" stroke-width="0.5"/><rect x="1.5" y="4" width="2" height="3" fill="#e89a4a"/></svg>
<svg style="position:absolute;left:477.5px;top:88px;overflow:visible" width="16" height="16" viewBox="0 0 16 16"><path d="M3.6 0.5 H12.5 L15.3 3.3 V15.5 H3.6 Z" fill="#f7f7f7" stroke="#8a8a8a" stroke-width="0.9"/><path d="M12.5 0.5 V3.3 H15.3" fill="#ddd" stroke="#8a8a8a" stroke-width="0.6"/><path d="M0.8 4.2 L6.2 3 M0.3 6.2 L5.7 5" stroke="#3c86d6" stroke-width="1.2"/></svg>
<svg style="position:absolute;left:531.5px;top:65.5px;overflow:visible" width="26" height="33" viewBox="0 0 26 33"><path d="M0.5 0.5 H18.5 L25 7 V32 H0.5 Z" fill="#fafafa" stroke="#8c8c8c" stroke-width="1"/><path d="M18.5 0.5 V7 H25" fill="#e4e4e4" stroke="#8c8c8c" stroke-width="0.8"/><path d="M5.2 17.3 L10.6 23.4 L21.2 12" fill="none" stroke="#ee5a1e" stroke-width="2.6"/></svg>
<svg style="position:absolute;left:578px;top:65.5px;overflow:visible" width="15.5" height="17.5" viewBox="0 0 15.5 17.5"><rect x="0.5" y="0.5" width="12.5" height="15.5" fill="#fafafa" stroke="#7e7e7e" stroke-width="1"/><rect x="2" y="2" width="4" height="3.6" fill="#f26b2a"/><rect x="2" y="6.6" width="4" height="3.6" fill="#27a744"/><rect x="2" y="11.2" width="4" height="3.6" fill="#2f86de"/><path d="M7 3 H11.5 M7 8 H10" stroke="#bdbdbd" stroke-width="1"/><path d="M7.3 10.6 L11 6.6 L14.9 10.6 H12.6 V17.3 H9.5 V10.6 Z" fill="#1fba2f"/></svg>
<svg style="position:absolute;left:578px;top:89.5px;overflow:visible" width="14" height="16.5" viewBox="0 0 14 16.5"><path d="M0.5 0.5 H9.5 L13 4 V16 H0.5 Z" fill="#e3ebf6" stroke="#b6c5dc" stroke-width="1"/><path d="M3 13.5 L11.5 2.8" stroke="#a9bbd5" stroke-width="1.4"/></svg>
<svg style="position:absolute;left:578.5px;top:114px;overflow:visible" width="16.5" height="17" viewBox="0 0 16.5 17"><path d="M0.5 0 H8.5 V12 H0.5 Z" fill="#f8d877"/><path d="M0.5 0 L2.7 1.2 V13 L1.8 15 L0.5 12 Z" fill="#fde8a4"/><circle cx="10.5" cy="11.3" r="5" fill="#f0f0f0" stroke="#6f6f6f" stroke-width="1"/><path d="M10.5 8.5 V11.3 L12.5 10" stroke="#555" stroke-width="0.8" fill="none"/><path d="M3 11.5 Q4 15.8 9 15.8" stroke="#1fae39" stroke-width="1.8" fill="none"/><path d="M1.2 11.8 L4.8 11.8 L3 9 Z" fill="#1fae39"/></svg>
<svg style="position:absolute;left:651.5px;top:65px;overflow:visible" width="17" height="17" viewBox="0 0 17 17"><rect x="0.7" y="0.7" width="7.6" height="7.6" fill="#bfe0fb" stroke="#3d9aea" stroke-width="1.3"/><rect x="8.3" y="0.7" width="7.6" height="7.6" fill="#bfe0fb" stroke="#3d9aea" stroke-width="1.3"/><rect x="0.7" y="8.3" width="7.6" height="7.6" fill="#bfe0fb" stroke="#3d9aea" stroke-width="1.3"/><rect x="8.3" y="8.3" width="7.6" height="7.6" fill="#bfe0fb" stroke="#3d9aea" stroke-width="1.3"/></svg>
<svg style="position:absolute;left:651.5px;top:88.5px;overflow:visible" width="17" height="15" viewBox="0 0 17 15"><rect x="1.8" y="1" width="5.2" height="5.2" fill="#fff" stroke="#a4a4a4" stroke-width="1.1"/><rect x="9.6" y="1" width="5.2" height="5.2" fill="#fff" stroke="#a4a4a4" stroke-width="1.1"/><rect x="1.8" y="8.6" width="5.2" height="5.2" fill="#fff" stroke="#a4a4a4" stroke-width="1.1"/><rect x="9.6" y="8.6" width="5.2" height="5.2" fill="#fff" stroke="#a4a4a4" stroke-width="1.1"/></svg>
<svg style="position:absolute;left:651.5px;top:110.5px;overflow:visible" width="17" height="17" viewBox="0 0 17 17"><rect x="1.8" y="1.4" width="5.2" height="5.2" fill="#fff" stroke="#a4a4a4" stroke-width="1.1"/><rect x="9.3" y="0.6" width="6.8" height="7.4" fill="#bfe0fb" stroke="#3d9aea" stroke-width="1.3"/><rect x="0.7" y="8.6" width="7.2" height="7.2" fill="#bfe0fb" stroke="#3d9aea" stroke-width="1.3"/><rect x="9.8" y="9.6" width="5.2" height="5.2" fill="#fff" stroke="#a4a4a4" stroke-width="1.1"/></svg>
<svg style="position:absolute;left:14px;top:174px;overflow:visible" width="14.5" height="9.5" viewBox="0 0 14.5 9.5"><path d="M14 4.75 H1 M5.2 0.5 L0.9 4.75 L5.2 9" stroke="#c4c4c4" stroke-width="1.1" fill="none"/></svg>
<svg style="position:absolute;left:48px;top:174px;overflow:visible" width="14.5" height="9.5" viewBox="0 0 14.5 9.5"><path d="M0.5 4.75 H13.5 M9.3 0.5 L13.6 4.75 L9.3 9" stroke="#c4c4c4" stroke-width="1.1" fill="none"/></svg>
<svg style="position:absolute;left:78px;top:176.5px;overflow:visible" width="7.5" height="4.5" viewBox="0 0 7.5 4.5"><path d="M0.4 0.4 L3.75 3.8 L7.1 0.4" stroke="#c0c0c0" stroke-width="1" fill="none"/></svg>
<svg style="position:absolute;left:98.5px;top:174px;overflow:visible" width="11" height="13" viewBox="0 0 11 13"><path d="M5.5 13 V1 M0.6 5.8 L5.5 0.9 L10.4 5.8" stroke="#5c5c5c" stroke-width="1.5" fill="none"/></svg>
<svg style="position:absolute;left:123.2px;top:170.8px;overflow:visible" width="10" height="15" viewBox="0 0 10 15"><path d="M0 0 H8.60 V8.10 H10.00 V13.20 H0 Z" fill="#f8d877"/>
<path d="M0 0 L3.00 2.10 V13.20 L2.20 15.00 L0 12.90 Z" fill="#fde8a4"/></svg>
<svg style="position:absolute;left:143.5px;top:176px;overflow:visible" width="8" height="5.5" viewBox="0 0 8 5.5"><path d="M3.6 0.3 L0.8 2.75 L3.6 5.2 M7.4 0.3 L4.6 2.75 L7.4 5.2" stroke="#555" stroke-width="1" fill="none"/></svg>
<svg style="position:absolute;left:222.5px;top:175.3px;overflow:visible" width="4.5" height="7" viewBox="0 0 4.5 7"><path d="M0.4 0.4 L3.9 3.5 L0.4 6.6" stroke="#6a6a6a" stroke-width="1" fill="none"/></svg>
<svg style="position:absolute;left:276px;top:175.3px;overflow:visible" width="4.5" height="7" viewBox="0 0 4.5 7"><path d="M0.4 0.4 L3.9 3.5 L0.4 6.6" stroke="#6a6a6a" stroke-width="1" fill="none"/></svg>
<svg style="position:absolute;left:435px;top:177px;overflow:visible" width="10" height="5.5" viewBox="0 0 10 5.5"><path d="M0.5 0.5 L5 5 L9.5 0.5" stroke="#4a4a4a" stroke-width="1.2" fill="none"/></svg>
<svg style="position:absolute;left:466px;top:171px;overflow:visible" width="16" height="16" viewBox="0 0 16 16"><path d="M10.57 3.71 A5 5 0 1 1 4.31 4.36" stroke="#656565" stroke-width="1.7" fill="none"/><path d="M2.6 1.8 L7.2 1.8 L7.2 6.1 Z" fill="#656565"/></svg>
<svg style="position:absolute;left:516.5px;top:172.5px;overflow:visible" width="14" height="13" viewBox="0 0 14 13"><circle cx="8.8" cy="4.8" r="4.1" stroke="#707070" stroke-width="1.1" fill="none"/><path d="M5.8 7.8 L0.8 12.5" stroke="#707070" stroke-width="1.3"/></svg>
<svg style="position:absolute;left:26px;top:226px;overflow:visible" width="20" height="17" viewBox="0 0 20 17"><path d="M12.5 3.0 L13.9 7.2 L17.8 7.3 L14.3 10.2 L12.6 14.9 L9.6 12.5 L4.8 14.7 L7.6 10.3 L4.5 7.3 L10.2 7.2 Z" fill="#2a9cf0" stroke="#1a86dc" stroke-width="0.7" stroke-linejoin="round"/><path d="M6.5 4.5 L9.5 3.5 M2.5 11.5 L6 10 M4 13 L6.5 12" stroke="#a8d3f3" stroke-width="1.1"/></svg>
<svg style="position:absolute;left:29.5px;top:262.5px;overflow:visible" width="16" height="16" viewBox="0 0 16 16"><path d="M0.5 0 H8.5 V13 H0.5 Z" fill="#f8d877"/><path d="M0.5 0 L2.8 1.2 V13.5 L1.8 15.5 L0.5 13 Z" fill="#fde8a4"/><ellipse cx="9.5" cy="11" rx="5.3" ry="4.3" fill="#fff" stroke="#e8302b" stroke-width="1.4"/><ellipse cx="9.5" cy="11" rx="2.6" ry="2.1" fill="none" stroke="#e8302b" stroke-width="1.3"/></svg>
<svg style="position:absolute;left:25.7px;top:297.5px;overflow:visible" width="19" height="13" viewBox="0 0 19 13"><path d="M4 12.8 A3.8 3.8 0 0 1 3.2 5.5 A5.5 5.5 0 0 1 13.5 4 A4.5 4.5 0 0 1 15 12.8 Z" fill="#0c64c0"/><path d="M6 12.8 A3.5 3.5 0 0 1 8.5 7 A5 5 0 0 1 14 6.5 A3.3 3.3 0 0 1 18.7 10 A3 3 0 0 1 15.5 12.8 Z" fill="#1d8ef0"/></svg>
<svg style="position:absolute;left:38.3px;top:324px;overflow:visible" width="10.5" height="14" viewBox="0 0 10.5 14"><path d="M0 0 H9.03 V7.56 H10.50 V12.32 H0 Z" fill="#f8d877"/>
<path d="M0 0 L3.15 1.96 V12.32 L2.31 14.00 L0 12.04 Z" fill="#fde8a4"/></svg>
<svg style="position:absolute;left:38.3px;top:350.5px;overflow:visible" width="10.5" height="14" viewBox="0 0 10.5 14"><path d="M0 0 H9.03 V7.56 H10.50 V12.32 H0 Z" fill="#f8d877"/>
<path d="M0 0 L3.15 1.96 V12.32 L2.31 14.00 L0 12.04 Z" fill="#fde8a4"/></svg>
<svg style="position:absolute;left:27px;top:385px;overflow:visible" width="19" height="16" viewBox="0 0 19 16"><path d="M6.5 0.5 L17.8 3 V10.5 L6.5 8.5 Z" fill="#2b9af3" stroke="#5a8fc0" stroke-width="0.6"/><path d="M11 9.8 L12 12" stroke="#aaa" stroke-width="1"/><path d="M0.5 13 L9 10.5 L14 13 L5.5 15.5 Z" fill="#e2e2e2" stroke="#c8c8c8" stroke-width="0.6"/></svg>
<svg style="position:absolute;left:36px;top:409.5px;overflow:visible" width="17" height="16.5" viewBox="0 0 17 16.5"><path d="M8.3 0.5 L16.2 3.2 V12.6 L8.3 16 L0.6 12.6 V3.2 Z" fill="#2fb5c9"/><path d="M0.6 3.2 L8.3 6.3 V16 L0.6 12.6 Z" fill="#a7e3eb"/><path d="M8.3 6.3 L16.2 3.2 V12.6 L8.3 16 Z" fill="#1b98ad"/><path d="M0.6 3.2 L8.3 0.5 L16.2 3.2 L8.3 6.3 Z" fill="#6cd0dc"/><path d="M0.6 12.6 L8.3 10 L16.2 12.6 L8.3 16 Z" fill="#15798c" opacity="0.6"/></svg>
<svg style="position:absolute;left:36.3px;top:438.3px;overflow:visible" width="16.5" height="12.5" viewBox="0 0 16.5 12.5"><rect x="0.5" y="0.5" width="15.5" height="11.5" fill="#1a8ff0" stroke="#2575c4" stroke-width="0.8"/><path d="M2 11 L14.5 2" stroke="#4aa9f6" stroke-width="0.6"/><rect x="1.5" y="10.5" width="13.5" height="1" fill="#1565b5"/></svg>
<svg style="position:absolute;left:38px;top:462.5px;overflow:visible" width="13" height="16" viewBox="0 0 13 16"><path d="M0.5 0.5 H9.5 L12.5 3.5 V15.5 H0.5 Z" fill="#f4f4f4" stroke="#9a9a9a" stroke-width="0.9"/><path d="M2.5 3 L4 2 V6 M5.5 4 H9 M2.5 7.5 H10.5" stroke="#3d8ee0" stroke-width="1"/><path d="M2.5 9.5 H7 M2.5 11.5 H7 M2.5 13.5 H10.5" stroke="#9a9a9a" stroke-width="0.8"/><rect x="8" y="9" width="3" height="3" fill="#6fa96b"/></svg>
<svg style="position:absolute;left:37px;top:489.5px;overflow:visible" width="15" height="15" viewBox="0 0 15 15"><path d="M3.7 0.5 H11.2 V6.8 H14.8 L7.45 14.5 L0.2 6.8 H3.7 Z" fill="#3a88da"/></svg>
<svg style="position:absolute;left:38.5px;top:514.5px;overflow:visible" width="11" height="16" viewBox="0 0 11 16"><path d="M5.5 0.5 V12" stroke="#1e9cf0" stroke-width="1.6"/><ellipse cx="3.2" cy="12.6" rx="3" ry="2.6" fill="#1e9cf0"/><path d="M5.8 0.8 Q10.5 3.5 9.5 9" stroke="#1e9cf0" stroke-width="1.8" fill="none"/></svg>
<svg style="position:absolute;left:36.5px;top:542.5px;overflow:visible" width="16" height="12.5" viewBox="0 0 16 12.5"><rect x="0.5" y="0.5" width="15" height="11.5" fill="#e8e8e8" stroke="#b0b0b0" stroke-width="0.8"/><rect x="1.8" y="1.8" width="12.4" height="8.8" fill="#bfe0f7"/><path d="M1.8 8 Q5 4 9 6.5 T14.2 8.5 V10.6 H1.8 Z" fill="#3e7e5a"/><path d="M5 10.6 Q9 8 14.2 9.2 V10.6 Z" fill="#5aa0d0"/></svg>
<svg style="position:absolute;left:36.5px;top:566px;overflow:visible" width="16" height="17" viewBox="0 0 16 17"><rect x="0.5" y="0.5" width="15" height="16" fill="#333"/><rect x="3.2" y="1.3" width="9.6" height="6.7" fill="#5d8fd6"/><rect x="3.2" y="9" width="9.6" height="6.7" fill="#5d8fd6"/><circle cx="10" cy="4.5" r="2" fill="#e8b030"/><circle cx="10" cy="12.3" r="2" fill="#e8b030"/><path d="M3.5 6.5 L6 5 L7.5 7.5 M3.5 14 L6 12.5 L7.5 15" stroke="#d04040" stroke-width="1"/><rect x="1" y="1.5" width="1.2" height="1" fill="#ddd"/><rect x="13.8" y="1.5" width="1.2" height="1" fill="#ddd"/><rect x="1" y="4" width="1.2" height="1" fill="#ddd"/><rect x="13.8" y="4" width="1.2" height="1" fill="#ddd"/><rect x="1" y="6.5" width="1.2" height="1" fill="#ddd"/><rect x="13.8" y="6.5" width="1.2" height="1" fill="#ddd"/><rect x="1" y="9" width="1.2" height="1" fill="#ddd"/><rect x="13.8" y="9" width="1.2" height="1" fill="#ddd"/><rect x="1" y="11.5" width="1.2" height="1" fill="#ddd"/><rect x="13.8" y="11.5" width="1.2" height="1" fill="#ddd"/><rect x="1" y="14" width="1.2" height="1" fill="#ddd"/><rect x="13.8" y="14" width="1.2" height="1" fill="#ddd"/></svg>
<svg style="position:absolute;left:35px;top:593px;overflow:visible" width="19" height="17" viewBox="0 0 19 17"><rect x="0.5" y="3.2" width="3.6" height="3.4" fill="#1ea7f0"/><rect x="4.6" y="2.6" width="4" height="4" fill="#1ea7f0"/><rect x="0.5" y="7.1" width="3.6" height="3.4" fill="#1ea7f0"/><rect x="4.6" y="7.1" width="4" height="4" fill="#1ea7f0"/><path d="M1 13.5 L4 9.5 H15.5 V13.5 L14 15.8 H1.5 Z" fill="#e6e6e6" stroke="#9a9a9a" stroke-width="0.6"/><rect x="2" y="13.2" width="12" height="2.4" fill="#3a3a3a"/><rect x="11" y="14" width="1.5" height="1" fill="#37d04a"/><path d="M12.5 6 V3 A2.5 2.5 0 0 1 17.5 3 V4" stroke="#8a8a8a" stroke-width="1" fill="none"/><rect x="11.5" y="5.5" width="6.5" height="6" rx="1" fill="#dcdcdc" stroke="#9a9a9a" stroke-width="0.6"/><path d="M11.8 7.6 H17.7 M11.8 9.8 H17.7" stroke="#5aa0e0" stroke-width="0.6"/></svg>
<svg style="position:absolute;left:35px;top:619.5px;overflow:visible" width="19" height="16" viewBox="0 0 19 16"><path d="M1 12.5 L4 8.5 H15.5 V12.5 L14 14.8 H1.5 Z" fill="#e6e6e6" stroke="#9a9a9a" stroke-width="0.6"/><rect x="2" y="12.2" width="12" height="2.4" fill="#3a3a3a"/><rect x="11" y="13" width="1.5" height="1" fill="#37d04a"/><path d="M12.5 5 V2.5 A2.5 2.5 0 0 1 17.5 2.5 V3.5" stroke="#8a8a8a" stroke-width="1" fill="none"/><rect x="11.5" y="4.5" width="6.5" height="6.5" rx="1" fill="#dcdcdc" stroke="#9a9a9a" stroke-width="0.6"/><path d="M11.8 6.6 H17.7 M11.8 8.8 H17.7" stroke="#5aa0e0" stroke-width="0.6"/></svg>
<svg style="position:absolute;left:27.5px;top:653px;overflow:visible" width="18" height="18" viewBox="0 0 18 18"><circle cx="11.2" cy="6.8" r="6.2" fill="#4a94cf"/><path d="M6 4 Q11 6 16.5 4.5 M5.5 8.5 Q11 11 17 8" stroke="#a8d4f2" stroke-width="0.9" fill="none"/><path d="M0.6 7.5 L10.3 9.8 V15.3 L0.6 14 Z" fill="#2b9af3" stroke="#3c7fc0" stroke-width="0.5"/><path d="M4 15 L5 17 H8.5" stroke="#bbb" stroke-width="1" fill="none"/></svg>
<svg style="position:absolute;left:0px;top:0px;overflow:visible" width="768" height="743" viewBox="0 0 768 743"><line x1="420.5" y1="693" x2="359.6" y2="588.8" stroke="#f40000" stroke-width="3.3"/><path d="M353.6 578 L354.4 592.6 L364.9 585.1 Z" fill="#f40000"/></svg>
</body></html>
